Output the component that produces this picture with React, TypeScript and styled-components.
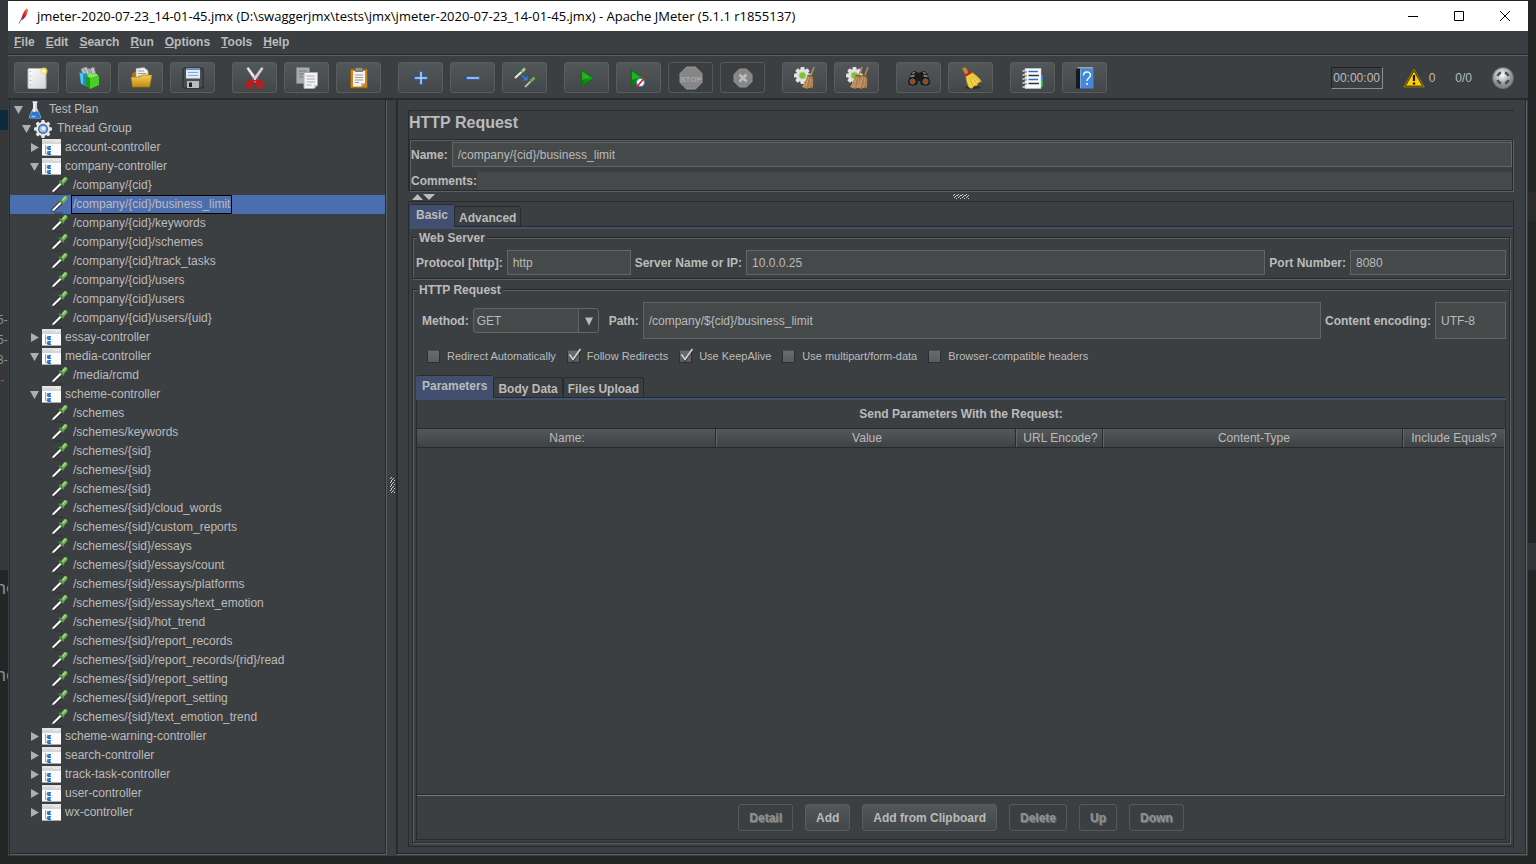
import React from 'react';
import styled, { createGlobalStyle, css } from 'styled-components';

const c = {
  panel: '#3c3f41',
  field: '#45494a',
  edge: '#646464',
  dark: '#282b2d',
  light: '#5d6061',
  text: '#bbbbbb',
  blue: '#424f6f',
  select: '#4b6eaf',
};

const Global = createGlobalStyle`
  *, *::before, *::after { box-sizing: border-box; }
  html, body { margin: 0; padding: 0; background: #242525; }
  body, button, input, select, table {
    font-family: "Liberation Sans", Arial, sans-serif;
    font-size: 12px;
    line-height: 16px;
    color: ${c.text};
  }
  button { margin: 0; padding: 0; border: 0; background: none; }
`;

/* ---------- desktop and window ---------- */

const Desktop = styled.div`
  display: grid;
  grid-template-columns: 8px minmax(0, 1fr) 8px;
  min-height: 100vh;
  background: #242525;
`;

const BehindLeft = styled.div`
  display: flex;
  flex-direction: column;
  overflow: hidden;
  background: linear-gradient(#35383a 110px, #0d293e 110px, #0d293e 130px, #353739 130px, #353739 570px, #242525 570px);
`;

const Scrap = styled.span<{ $gap: number; $big?: boolean; $red?: boolean }>`
  margin-top: ${p => p.$gap}px;
  margin-left: -3px;
  white-space: nowrap;
  line-height: 20px;
  color: ${p => (p.$red ? '#a8553a' : '#8b8f92')};
  ${p => p.$big && css`
    margin-left: -5px;
    font-family: "Noto Sans", sans-serif;
    font-size: 18px;
  `}
`;

const BehindRight = styled.div`
  background: linear-gradient(#242525 192px, #2b2b2b 192px, #2b2b2b 221px, #242525 221px, #242525 543px, #313435 543px, #313435 570px, #242525 570px);
`;

const Window = styled.div`
  display: flex;
  flex-direction: column;
  min-width: 0;
  margin: 1px 0 8px;
  background: ${c.panel};
`;

const TitleBar = styled.header`
  display: flex;
  align-items: center;
  height: 30px;
  padding-left: 8px;
  background: #fff;
  color: #000;
`;

const Title = styled.h1`
  flex: 1;
  margin: 0 0 0 5px;
  font: 400 13px/16px "Open Sans", "Noto Sans", sans-serif;
  white-space: nowrap;
`;

const WindowButton = styled.button`
  display: flex;
  align-items: center;
  justify-content: center;
  width: 46px;
  height: 30px;
`;

const MenuBar = styled.nav`
  display: flex;
  gap: 11px;
  height: 25px;
  padding: 3px 6px 0;
  border-bottom: 1px solid ${c.light};
  box-shadow: inset 0 -1px ${c.dark};
`;

const MenuButton = styled.button`
  height: 16px;
  font-weight: 700;
`;

/* ---------- toolbar ---------- */

const Toolbar = styled.div`
  display: flex;
  align-items: center;
  gap: 17px;
  height: 44px;
  padding: 1px 14px 0 6px;
  border-bottom: 2px solid ${c.dark};
`;

const ToolGroup = styled.div`
  display: flex;
  gap: 7px;
`;

const raised = css`
  border: 1px solid #5a5d5e;
  border-radius: 3px;
  background: linear-gradient(#525759, #434749);
  &:disabled { background: none; border-color: #57595a; }
`;

const ToolButton = styled.button`
  display: flex;
  align-items: center;
  justify-content: center;
  width: 45px;
  height: 31px;
  ${raised}
`;

const Status = styled.div`
  display: flex;
  align-items: center;
  margin-left: auto;
  gap: 20px;
`;

const Timer = styled.span`
  width: 52px;
  height: 22px;
  border: 1px solid;
  border-color: #222 #8b8d8e #8b8d8e #222;
  line-height: 20px;
  text-align: center;
`;

const Warnings = styled.span`
  display: flex;
  align-items: center;
  gap: 4px;
`;

/* ---------- split body ---------- */

const Body = styled.div`
  display: grid;
  grid-template-columns: 379px 8px minmax(0, 1fr);
  flex: 1;
  padding: 0 0 0 1px;
`;

const TreePane = styled.aside`
  border: solid ${c.dark};
  border-width: 0 1px 1px 1px;
  box-shadow: 1px 1px ${c.light};
  margin: 0 2px 2px 0;
`;

const Tree = styled.ul`
  margin: 0;
  padding: 0;
  list-style: none;
`;

const Node = styled.li<{ $depth: number; $selected?: boolean }>`
  display: flex;
  align-items: center;
  height: 19px;
  padding-left: ${p => 3 + p.$depth * 8}px;
  white-space: nowrap;
  background: ${p => (p.$selected ? c.select : 'transparent')};
`;

const Handle = styled.span`
  display: flex;
  width: 11px;
  margin-right: 1px;
`;

const NodeIcon = styled.span`
  display: flex;
  justify-content: center;
  width: 20px;
`;

const NodeText = styled.span<{ $selected?: boolean }>`
  height: 19px;
  margin-left: 2px;
  padding: 0 1px;
  line-height: 17px;
  border: 1px solid ${p => (p.$selected ? '#000' : 'transparent')};
`;

const Splitter = styled.div`
  display: flex;
  align-items: center;
  justify-content: center;
  padding-top: 14px;
`;

const Editor = styled.main`
  display: flex;
  flex-direction: column;
  min-width: 0;
  padding: 10px 11px 6px 10px;
  border: solid ${c.dark};
  border-width: 0 1px 1px 2px;
  box-shadow: 1px 1px ${c.light};
  margin: 0 2px 2px 0;
`;

/* ---------- editor form ---------- */

const HeadBox = styled.section`
  border: solid ${c.dark};
  border-width: 1px 0 0 1px;
`;

const Heading = styled.h2`
  height: 28px;
  margin: 0;
  font-size: 16px;
  line-height: 24px;
`;

const etched = css`
  border: 1px solid ${c.dark};
  box-shadow: inset 1px 1px ${c.light}, 1px 1px ${c.light};
`;

const NameBox = styled.div`
  ${etched}
  display: flex;
  flex-direction: column;
  gap: 5px;
  margin-right: 1px;
  padding: 2px 0 0 1px;
`;

const Line = styled.div<{ $gap?: number }>`
  display: flex;
  align-items: center;
  gap: ${p => p.$gap ?? 4}px;
`;

const Label = styled.label<{ $lead?: boolean }>`
  margin-left: ${p => (p.$lead ? 6 : 0)}px;
  font-weight: 700;
  white-space: nowrap;
`;

const Field = styled.input<{ $w?: number; $tall?: boolean; $bare?: boolean }>`
  ${p => (p.$w ? `flex: 0 0 ${p.$w}px; width: ${p.$w}px;` : 'flex: 1;')}
  min-width: 0;
  height: ${p => (p.$tall ? 37 : 25)}px;
  padding: 0 5px;
  border: 1px solid ${c.edge};
  border-radius: 0;
  background: ${c.field};
  outline: 0;
  ${p => p.$bare && 'height: 18px; border: 0;'}
`;

const Divider = styled.div`
  display: grid;
  grid-template-columns: 1fr auto 1fr;
  align-items: center;
  height: 10px;
  padding: 1px 4px 0;
`;

const Tabbed = styled.section`
  display: flex;
  flex-direction: column;
  flex: 1;
  border: 1px solid ${c.dark};
  padding: 2px 0 3px 1px;
`;

const TabList = styled.div`
  display: flex;
  align-items: flex-end;
  border-bottom: 2px solid ${c.blue};
  box-shadow: inset 0 -1px ${c.dark};
`;

const Tab = styled.button<{ $active?: boolean }>`
  height: 21px;
  padding: 1px 4px 0;
  border: 1px solid ${c.dark};
  border-bottom: 0;
  border-radius: 3px 3px 0 0;
  font-weight: 700;
  ${p => p.$active && css`
    height: 23px;
    padding: 0 5px 3px;
    background: ${c.blue};
    border-color: ${c.blue};
    border-top-color: ${c.dark};
  `}
`;

const GroupBox = styled.div<{ $grow?: boolean }>`
  ${etched}
  position: relative;
  display: flex;
  flex-direction: column;
  margin: ${p => (p.$grow ? '10px 3px 0 2px' : '8px 3px 0 2px')};
  padding: ${p => (p.$grow ? '12px 3px 2px' : '12px 3px 3px')};
  ${p => p.$grow && 'flex: 1;'}
`;

const Legend = styled.h3`
  position: absolute;
  top: -8px;
  left: 4px;
  margin: 0;
  padding: 0 2px;
  font-size: 12px;
  line-height: 16px;
  background: ${c.panel};
`;

const Combo = styled.div`
  display: flex;
  position: relative;
  flex: 0 0 126px;
`;

const Select = styled.select`
  width: 100%;
  height: 25px;
  padding: 0 3px;
  border: 1px solid ${c.edge};
  border-radius: 3px;
  appearance: none;
  background: linear-gradient(90deg, ${c.field} 104px, ${c.edge} 104px, ${c.edge} 105px, ${c.panel} 105px);
  outline: 0;
`;

const ComboArrow = styled.svg`
  position: absolute;
  right: 5px;
  top: 9px;
  pointer-events: none;
`;

const Checks = styled.div`
  display: flex;
  gap: 11px;
  height: 36px;
  padding: 9px 11px 0;
`;

const CheckLabel = styled.label`
  display: flex;
  align-items: center;
  gap: 7px;
  height: 16px;
  font-size: 11px;
  white-space: nowrap;
`;

const CheckBox = styled.input`
  appearance: none;
  width: 13px;
  height: 13px;
  margin: 0;
  border: 1px solid #2d2f30;
  border-top-color: #494c4d;
  background: linear-gradient(#6b6b6b, #5b5b5b);
`;

const CheckHolder = styled.span`
  position: relative;
  display: flex;
`;

const Tick = styled.svg`
  position: absolute;
  left: 0;
  top: -2px;
  pointer-events: none;
`;

const ParamPanel = styled.div`
  display: flex;
  flex-direction: column;
  flex: 1;
  border: solid ${c.dark};
  border-width: 0 1px 1px;
`;

const Caption = styled.h4`
  margin: 0;
  padding: 6px 0;
  font-size: 12px;
  line-height: 16px;
  text-align: center;
`;

const Scroll = styled.div`
  flex: 1;
  border-top: 1px solid ${c.dark};
  border-right: 1px solid ${c.light};
  border-bottom: 1px solid #77797a;
  box-shadow: inset 0 -1px ${c.dark};
`;

const Table = styled.table`
  width: 100%;
  table-layout: fixed;
  border-collapse: collapse;
`;

const Th = styled.th`
  height: 18px;
  padding: 0;
  border-bottom: 1px solid ${c.dark};
  font-weight: 400;
  line-height: 16px;
  background: linear-gradient(#54585a, #3f4244);
  box-shadow: inset -1px 0 ${c.edge}, inset -2px 0 ${c.dark};
  white-space: nowrap;
  &:last-child { box-shadow: none; }
`;

const Actions = styled.div`
  display: flex;
  justify-content: center;
  gap: 12px;
  padding: 8px 0;
`;

const Action = styled.button`
  height: 27px;
  padding: 0 10px;
  font-weight: 700;
  ${raised}
  &:disabled { color: #8f9192; text-shadow: 1px 1px #6f7274; }
`;

/* ---------- icons ---------- */

const Ico = ({ children, size = 24 }: { children: React.ReactNode; size?: number }) => (
  <svg width={size} height={size} viewBox="0 0 24 24" aria-hidden="true">{children}</svg>
);

const Hidden = styled.svg`
  position: absolute;
`;

const Defs = () => (
  <Hidden width="0" height="0" aria-hidden="true">
    <defs>
      <linearGradient id="paper" x2="1" y2="1"><stop stopColor="#fff" /><stop offset="1" stopColor="#d4d4d4" /></linearGradient>
      <linearGradient id="play"><stop stopColor="#067a06" /><stop offset="1" stopColor="#10b010" /></linearGradient>
      <linearGradient id="gold" x2="0" y2="1"><stop stopColor="#f3cf5c" /><stop offset="1" stopColor="#c48a0e" /></linearGradient>
      <linearGradient id="straw" x2="1"><stop stopColor="#c99b62" /><stop offset="1" stopColor="#8d6337" /></linearGradient>
      <radialGradient id="ball" cx=".45" cy=".35"><stop stopColor="#fff" /><stop offset="1" stopColor="#8a8a8a" /></radialGradient>
      <linearGradient id="feather" x1="0" y1="1" x2="1" y2="0"><stop stopColor="#6b2a7a" /><stop offset=".5" stopColor="#d0213c" /><stop offset="1" stopColor="#f6a11c" /></linearGradient>
    </defs>
  </Hidden>
);

const gearTeeth = (cx: number, cy: number, r: number, w: number) =>
  [0, 45, 90, 135].map(a => (
    <rect key={a} x={cx - w / 2} y={cy - r} width={w} height={r * 2} rx="1" transform={`rotate(${a} ${cx} ${cy})`} />
  ));

const Broom = ({ dx = 0 }: { dx?: number }) => (
  <g transform={`translate(${dx} 0)`}>
    <path d="M21 1 18 9" stroke="#b98a55" strokeWidth="1.600" />
    <path d="M15 8.500l4.500.5 1 4-.5 9.500-3.500-1-2 1.500-2.500-1-3-1c2-3 4-8 6-12.500z" fill="url(#straw)" />
    <path d="M16 11l-3.500 10M18 11l-1.500 11M19 13l0 8" stroke="#e0b985" strokeWidth=".6" />
    <path d="M14.500 9.500l5.500.5" stroke="#7d552d" />
  </g>
);

const CogBroom = ({ two }: { two?: boolean }) => (
  <Ico>
    <g fill="#e4e4e4">{gearTeeth(9.5, 9.5, 8.5, 4)}<circle cx="9.500" cy="9.500" r="6.500" /></g>
    <circle cx="9.500" cy="9.500" r="4" fill="#c9c9c9" />
    <circle cx="9.500" cy="9.500" r="3" fill="#7cc820" />
    {two && <Broom dx={-4} />}
    <Broom dx={two ? 2 : 0} />
  </Ico>
);

const Dropper = () => (
  <svg width="18" height="19" viewBox="0 0 18 19" aria-hidden="true">
    <path d="M4 18h9" stroke="#2b2d2f" opacity=".7" />
    <path d="M.5 17.500l1.500-4L9.500 6l3 3L5 16z" fill="#25282a" />
    <path d="M1 17l1.700-3.200L10 6.600l1.900 1.900-7.400 6.800z" fill="#8f9293" />
    <path d="M3 15.300L10.800 7.700" stroke="#fff" strokeWidth="1.700" />
    <path d="M9.200 4.800l4.600 4.400" stroke="#4a8a3c" strokeWidth="2.200" />
    <path d="M11 5.500l3-3.900c1.300-1.400 4.300.2 3.300 2.400L13.600 8z" fill="#6fb54e" />
    <path d="M12.500 5.300l3.200-3.500" stroke="#a9dc90" strokeWidth="1.400" />
  </svg>
);

const icons: Record<string, React.ReactNode> = {
  New: (
    <Ico>
      <rect x="3" y="2.500" width="18" height="20" rx="1" fill="url(#paper)" stroke="#b5b5b5" />
      <path d="M5.500 5v15" stroke="#999" strokeDasharray="1 3.500" />
      <circle cx="19" cy="5" r="3.500" fill="#f4e05c" opacity=".75" /><circle cx="19" cy="5" r="1.600" fill="#fffbd0" />
    </Ico>
  ),
  Templates: (
    <Ico>
      <path d="M4 3l5-2 3 2 5-2 2 8H6z" fill="#bfc5c8" stroke="#7c8488" strokeWidth=".7" />
      <path d="M7 3l3 6M13 2l2 6M10 2l4 7" stroke="#6f7679" strokeWidth=".8" />
      <path d="M2 6l8 2v13l-6-3z" fill="#1b8fd0" /><path d="M3 7l3 .8v10.500l-2-1z" fill="#5fc4ef" />
      <path d="M9 10l3-3 8 1 2 3v8l-9 4-4-3z" fill="#1e9c14" /><path d="M13 12l9-2v9l-9 4z" fill="#48cf28" />
      <path d="M12 7l8 1 1 2-8 2-3-2z" fill="#8be36c" />
    </Ico>
  ),
  Open: (
    <Ico>
      <path d="M3 20V8l2-2h15v4l1 10z" fill="#a87708" />
      <path d="M7 2.500l8-1 4 3v10H7z" fill="#f1f1f1" stroke="#999" strokeWidth=".6" />
      <path d="M9 5h6M9 7.500h8M9 10h8" stroke="#999" />
      <path d="M2 11h9l2-2h10l-2.500 12H3.500z" fill="url(#gold)" stroke="#a87708" strokeWidth=".7" />
    </Ico>
  ),
  Save: (
    <Ico>
      <path d="M3 2h18l1 1v19H3l-1-1V3z" fill="#4a4d52" stroke="#25272a" />
      <rect x="5" y="2.500" width="14" height="10" fill="#dce9f8" /><path d="M5 3.500h14" stroke="#5b8fd1" />
      <path d="M7 6.500h10M7 9.500h10" stroke="#8ca7c6" />
      <rect x="6" y="15" width="12" height="7" fill="#b9bcbe" /><rect x="8" y="16.500" width="3" height="4.500" fill="#222" />
    </Ico>
  ),
  Cut: (
    <Ico>
      <path d="M3.500 2.500l2-1.500L15 14l-2 2.500z" fill="#ececec" stroke="#888" strokeWidth=".5" />
      <path d="M20.500 2.500l-2-1.500L9 14l2 2.500z" fill="#d6d6d6" stroke="#888" strokeWidth=".5" />
      <g fill="none" stroke="#d21313" strokeWidth="2.600"><ellipse cx="7" cy="18.500" rx="2.500" ry="3" transform="rotate(35 7 18.500)" /><ellipse cx="17" cy="18.500" rx="2.500" ry="3" transform="rotate(-35 17 18.500)" /><path d="M8.500 16l3-2.500M15.500 16l-3-2.500" /></g>
      <circle cx="12" cy="13" r="1" fill="#eee" />
    </Ico>
  ),
  Copy: (
    <Ico>
      <path d="M1.500 1.500h13v16h-13z" fill="#a9abac" stroke="#7f8182" /><path d="M4 5h8M4 8h8M4 11h4" stroke="#777" />
      <path d="M9 6.500h13.500V19l-3.500 3.500H9z" fill="#f3f3f3" stroke="#aaa" /><path d="M11.500 10h8.500M11.500 13h8.500M11.500 16h8.500M11.500 19h5" stroke="#aaa" />
      <path d="M19 22.500V19h3.500z" fill="#c5c5c5" />
    </Ico>
  ),
  Paste: (
    <Ico>
      <rect x="3.500" y="3" width="17" height="19" rx="1" fill="#c9841c" stroke="#8a560a" />
      <path d="M6 5h12v12l-4 3.500H6z" fill="#f4f4f4" /><path d="M14 20.500V17h4z" fill="#bbb" />
      <rect x="8" y="1.500" width="8" height="4" rx="1" fill="#8d8f8c" stroke="#555" strokeWidth=".7" />
      <path d="M8 9h8M8 11.500h8M8 14h8M8 16.500h4" stroke="#999" />
    </Ico>
  ),
  Expand: <Ico><path d="M12 5v14M5 12h14" stroke="#2e68bd" strokeWidth="3.200" /><path d="M12 6v12M6 12h12" stroke="#b4d6f8" strokeWidth="1.500" /></Ico>,
  Collapse: <Ico><path d="M5 12h14" stroke="#2e68bd" strokeWidth="3.200" /><path d="M6 12h12" stroke="#b4d6f8" strokeWidth="1.500" /></Ico>,
  Toggle: (
    <Ico>
      <path d="M2 12L9 5.500" stroke="#e8e8e8" strokeWidth="2" /><path d="M7.500 4l3 3" stroke="#3d7a33" strokeWidth="1.400" /><path d="M9 5.500L12 2.500" stroke="#9bd680" strokeWidth="2.800" />
      <path d="M12 21L18 15" stroke="#b8b8b8" strokeWidth="1.800" /><path d="M16.500 13.500l3 3" stroke="#3d7a33" strokeWidth="1.400" /><path d="M18 15L21.500 11.500" stroke="#6db34f" strokeWidth="2.600" />
      <path d="M8.500 9l4 4" stroke="#2f7ff0" strokeWidth="1.500" /><path d="M14.500 10v4.500H10z" fill="#2f7ff0" />
    </Ico>
  ),
  Start: <Ico><path d="M6 3l12 9L6 21z" fill="url(#play)" stroke="#0b6d0b" strokeWidth=".6" /><path d="M7 5v9l8-2.500z" fill="#43d543" opacity=".5" /></Ico>,
  'Start no pauses': (
    <Ico><path d="M4 3l12 9L4 21z" fill="url(#play)" stroke="#0b6d0b" strokeWidth=".6" /><path d="M5 5v9l7-3z" fill="#43d543" opacity=".5" />
      <circle cx="13.500" cy="16.500" r="4" fill="#fff" stroke="#3c78c8" strokeWidth="1.200" /><path d="M9.500 21l8-9" stroke="#dd2222" strokeWidth="1.800" /></Ico>
  ),
  Stop: (
    <Ico><path d="M7.500 1h9L23 7.500v9L16.500 23h-9L1 16.500v-9z" fill="#868686" stroke="#979797" />
      <text x="12" y="15.500" textAnchor="middle" fontSize="8" fontWeight="700" fill="#a9a9a9">STOP</text></Ico>
  ),
  Shutdown: <Ico><path d="M8.500 3h7L21 8.500v7L15.500 21h-7L3 15.500v-7z" fill="#868686" stroke="#939393" /><path d="M8.500 8.500l7 7M15.500 8.500l-7 7" stroke="#bdbdbd" strokeWidth="2.800" /></Ico>,
  Clear: <CogBroom />,
  'Clear all': <CogBroom two />,
  Search: (
    <Ico>
      <path d="M4 7l3-2 3 1 2 1 2-1 3-1 3 2 3 9-1 3h-8l-1-4h-2l-1 4H2l-1-3z" fill="#1b1b1b" />
      <circle cx="5.500" cy="15.500" r="3.800" fill="#555" stroke="#111" /><circle cx="18.500" cy="15.500" r="3.800" fill="#555" stroke="#111" />
      <circle cx="5.500" cy="15.500" r="2.300" fill="#9c4a1c" /><circle cx="18.500" cy="15.500" r="2.300" fill="#9c4a1c" />
      <path d="M5 7.500l3-1M19 7.500l-3-1M3.500 10.500l4-1M20.500 10.500l-4-1" stroke="#999" strokeWidth="1.300" />
    </Ico>
  ),
  'Reset search': (
    <Ico>
      <ellipse cx="14" cy="21.500" rx="8" ry="1.500" fill="#2c2e2f" />
      <path d="M3 2.500l2-1.500 2.500 1 2.500 5.500-3.500 2z" fill="#c48a3e" stroke="#8a5514" strokeWidth=".7" />
      <path d="M7 10l6-3.500c4 2.500 7 5 9.500 9l-3 1-1.500 3-3 .5-2 2.500-3-1C8 18 7 14 7 10z" fill="#f0d348" stroke="#b5930f" strokeWidth=".6" />
      <path d="M10 11l4 9M12 10l6 8M13 9l8 6" stroke="#c9a51f" strokeWidth=".7" />
      <path d="M6.500 9.500l6-3.500" stroke="#d42020" strokeWidth="2.500" />
    </Ico>
  ),
  'Function helper': (
    <Ico>
      <path d="M18 9h4v6h-4z" fill="#2d7fe0" /><path d="M18 15h4v6h-4z" fill="#27b52a" />
      <path d="M4 2.500h16v20H4z" fill="#fcfcfc" stroke="#c8c8c8" strokeWidth=".6" />
      <path d="M7.500 5.500H17M7.500 13.500H17" stroke="#2d6bd0" strokeWidth="1.300" /><path d="M7.500 9.500H18M7.500 17.500H18" stroke="#333" strokeWidth="1.300" />
      <path d="M1.500 5h4M1.500 9h4M1.500 13h4M1.500 17h4M1.500 21h4" stroke="#ddd" strokeWidth="1.600" /><path d="M3 6h3M3 10h3M3 14h3M3 18h3" stroke="#444" strokeWidth=".8" />
    </Ico>
  ),
  Help: (
    <Ico>
      <path d="M3 2.500l2-1h15v1H7z" fill="#eee" /><path d="M3 2.500h4v20H3z" fill="#15181c" />
      <rect x="7" y="2.500" width="13.500" height="20" fill="#4687d6" /><path d="M7.500 3v19" stroke="#77abea" />
      <path d="M10.500 9.500c0-4.500 7-4.500 7-.5 0 3-3.500 3-3.500 6" fill="none" stroke="#f1f6fc" strokeWidth="1.500" /><circle cx="14" cy="18" r="1.100" fill="#f1f6fc" />
    </Ico>
  ),
};

const Triangle = ({ open }: { open: boolean }) => (
  <svg width="11" height="11" viewBox="0 0 11 11" aria-hidden="true">
    <path d={open ? 'M1 2h9L5.500 10z' : 'M2 1v9l8-4.500z'} fill="#adafb0" />
  </svg>
);

const Flask = () => (
  <svg width="18" height="18" viewBox="0 0 18 18" aria-hidden="true">
    <path d="M7 1h4v6l4 8.500c.5 1-.2 2-1.500 2h-9C3.200 17.500 2.500 16.500 3 15.500L7 7z" fill="#cfd6dc" />
    <path d="M6 10.500h6l3 5.500-1.500 1.500h-9L3 16z" fill="#2b78cf" /><path d="M8.200 2v9" stroke="#fff" strokeWidth="1.200" />
    <path d="M5.500 15.500h4" stroke="#9cc8f4" strokeWidth="1.500" /><path d="M6.500 1h5" stroke="#fff" strokeWidth="1.200" />
  </svg>
);

const Gear = () => (
  <svg width="18" height="18" viewBox="0 0 18 18" aria-hidden="true">
    <g fill="#e6e6e6">{gearTeeth(9, 9, 9, 3.5)}<circle cx="9" cy="9" r="7" /></g>
    <circle cx="9" cy="9" r="5" fill="#3c68a8" /><circle cx="9" cy="9" r="3.600" fill="#a3bfe2" /><circle cx="9.500" cy="8.500" r="2" fill="#e9f1fb" />
  </svg>
);

const ControllerIcon = () => (
  <svg width="19" height="17" viewBox="0 0 19 17" aria-hidden="true">
    <rect width="19" height="17" fill="#fbfbfb" /><path d="M0 0h19v5H0z" fill="#d6d6d6" /><path d="M0 1h19" stroke="#f2f2f2" />
    <path d="M12 2.500h5" stroke="#fff" strokeDasharray="1 1" />
    <path d="M3.500 6v9M3.500 9H6M3.500 14H6" stroke="#aaa" fill="none" />
    <path d="M5 7h4v1l-1 1 1 1v1H6l-1-1zM5 12h4v1l-1 1 1 1v1H6l-1-1z" fill="#2273cf" /><path d="M5 8h1.500M5 13h1.500" stroke="#8fbcf0" />
    <path d="M0 16.500h19" stroke="#aaa" />
  </svg>
);

const gripDots = [0, 1, 2, 3].flatMap(i => [[1, 0], [3, 1], [0, 1], [2, 2], [1, 3], [3, 4]].map(([a, b]) => [a + i * 4, b]));

const Grip = ({ vertical }: { vertical?: boolean }) => (
  <svg width={vertical ? 5 : 16} height={vertical ? 16 : 5} aria-hidden="true">
    {gripDots.map(([a, b]) => <rect key={`${a}-${b}`} x={vertical ? b : a} y={vertical ? a : b} width="1" height="1" fill="#c8cacb" />)}
  </svg>
);

/* ---------- data ---------- */

type Kind = 'plan' | 'threads' | 'controller' | 'sampler';
type Item = { text: string; kind: Kind; open?: boolean };

const ctl = (text: string, open = false): Item => ({ text, kind: 'controller', open });
const req = (text: string): Item => ({ text, kind: 'sampler' });

const tree: Item[] = [
  { text: 'Test Plan', kind: 'plan', open: true },
  { text: 'Thread Group', kind: 'threads', open: true },
  ctl('account-controller'),
  ctl('company-controller', true),
  ...['', '/business_limit', '/keywords', '/schemes', '/track_tasks', '/users', '/users', '/users/{uid}'].map(s => req('/company/{cid}' + s)),
  ctl('essay-controller'),
  ctl('media-controller', true),
  req('/media/rcmd'),
  ctl('scheme-controller', true),
  req('/schemes'),
  req('/schemes/keywords'),
  ...['', '', '', '/cloud_words', '/custom_reports', '/essays', '/essays/count', '/essays/platforms', '/essays/text_emotion',
    '/hot_trend', '/report_records', '/report_records/{rid}/read', '/report_setting', '/report_setting', '/text_emotion_trend',
  ].map(s => req('/schemes/{sid}' + s)),
  ctl('scheme-warning-controller'),
  ctl('search-controller'),
  ctl('track-task-controller'),
  ctl('user-controller'),
  ctl('wx-controller'),
];

const depth: Record<Kind, number> = { plan: 0, threads: 1, controller: 2, sampler: 3 };
const nodeIcon: Record<Kind, React.ReactNode> = { plan: <Flask />, threads: <Gear />, controller: <ControllerIcon />, sampler: <Dropper /> };

const tools = [
  ['New', 'Templates', 'Open', 'Save'],
  ['Cut', 'Copy', 'Paste'],
  ['Expand', 'Collapse', 'Toggle'],
  ['Start', 'Start no pauses', 'Stop', 'Shutdown'],
  ['Clear', 'Clear all'],
  ['Search', 'Reset search'],
  ['Function helper', 'Help'],
];

const columns: [string, string][] = [
  ['Name:', '27.6%'], ['Value', '27.6%'], ['URL Encode?', '8%'], ['Content-Type', '27.6%'], ['Include Equals?', '9.2%'],
];

const checks: [string, boolean][] = [
  ['Redirect Automatically', false], ['Follow Redirects', true], ['Use KeepAlive', true],
  ['Use multipart/form-data', false], ['Browser-compatible headers', false],
];

const actions: [string, boolean][] = [
  ['Detail', false], ['Add', true], ['Add from Clipboard', true], ['Delete', false], ['Up', false], ['Down', false],
];

/* ---------- app ---------- */

export default function App() {
  return (
    <>
      <Global />
      <Defs />
      <Desktop>
        <BehindLeft aria-hidden="true">
          <Scrap $gap={310}>5-</Scrap>
          <Scrap $gap={0}>5-</Scrap>
          <Scrap $gap={0}>3-</Scrap>
          <Scrap $gap={0} $red>&nbsp;-</Scrap>
          <Scrap $gap={187} $big>no</Scrap>
          <Scrap $gap={67} $big>ne</Scrap>
        </BehindLeft>
        <Window>
          <TitleBar>
            <svg width="16" height="16" viewBox="0 0 16 16" aria-hidden="true">
              <path d="M5 12C6 8 7.500 3 10.500.5c1.500 0 1.800 1.500 1 4C10.500 7.500 8.500 11 6 12z" fill="url(#feather)" />
              <path d="M3 15.500L5.500 11" stroke="#7a3a62" strokeWidth=".8" />
            </svg>
            <Title>jmeter-2020-07-23_14-01-45.jmx (D:\swaggerjmx\tests\jmx\jmeter-2020-07-23_14-01-45.jmx) - Apache JMeter (5.1.1 r1855137)</Title>
            <WindowButton aria-label="Minimize"><svg width="10" height="10"><path d="M0 5.500h10" stroke="#000" /></svg></WindowButton>
            <WindowButton aria-label="Maximize"><svg width="10" height="10"><path d="M.5.5h9v9h-9z" stroke="#000" fill="none" /></svg></WindowButton>
            <WindowButton aria-label="Close"><svg width="10" height="10"><path d="M0 0l10 10M10 0L0 10" stroke="#000" /></svg></WindowButton>
          </TitleBar>
          <MenuBar>
            {['File', 'Edit', 'Search', 'Run', 'Options', 'Tools', 'Help'].map(m => <MenuButton key={m}><u>{m[0]}</u>{m.slice(1)}</MenuButton>)}
          </MenuBar>
          <Toolbar>
            {tools.map(group => (
              <ToolGroup key={group[0]}>
                {group.map(t => <ToolButton key={t} aria-label={t} disabled={t === 'Stop' || t === 'Shutdown'}>{icons[t]}</ToolButton>)}
              </ToolGroup>
            ))}
            <Status>
              <Timer>00:00:00</Timer>
              <Warnings>
                <svg width="22" height="20" viewBox="0 0 22 20" aria-hidden="true">
                  <path d="M11 1L21.300 19H.7z" fill="#8a7008" stroke="#8a7008" strokeLinejoin="round" />
                  <path d="M11 3L19.500 18h-17z" fill="#f9cc0a" stroke="#3a3205" strokeWidth=".8" />
                  <path d="M11 7v6" stroke="#1c1a05" strokeWidth="2.200" /><circle cx="11" cy="15.500" r="1.200" fill="#1c1a05" />
                </svg>
                0
              </Warnings>
              <span>0/0</span>
              <svg width="22" height="22" viewBox="0 0 22 22" aria-hidden="true">
                <circle cx="11" cy="11" r="10.500" fill="url(#ball)" stroke="#6f6f6f" />
                <g fill="none" stroke="#4a4d4f" strokeWidth="2.500"><path d="M9 5.500A6 6 0 0 0 5.500 9M13 5.500A6 6 0 0 1 16.500 9M9 16.500A6 6 0 0 1 5.500 13M13 16.500A6 6 0 0 0 16.500 13" /></g>
              </svg>
            </Status>
          </Toolbar>
          <Body>
            <TreePane>
              <Tree role="tree">
                {tree.map((n, i) => {
                  const selected = i === 5;
                  return (
                    <Node key={i} role="treeitem" aria-selected={selected} $depth={depth[n.kind]} $selected={selected}>
                      <Handle>{n.kind !== 'sampler' && <Triangle open={!!n.open} />}</Handle>
                      <NodeIcon>{nodeIcon[n.kind]}</NodeIcon>
                      <NodeText $selected={selected}>{n.text}</NodeText>
                    </Node>
                  );
                })}
              </Tree>
            </TreePane>
            <Splitter><Grip vertical /></Splitter>
            <Editor>
              <HeadBox>
                <Heading>HTTP Request</Heading>
                <NameBox>
                  <Line><Label htmlFor="name">Name:</Label><Field id="name" defaultValue="/company/{cid}/business_limit" /></Line>
                  <Line $gap={0}><Label htmlFor="comments">Comments:</Label><Field id="comments" $bare /></Line>
                </NameBox>
              </HeadBox>
              <Divider>
                <svg width="23" height="6" viewBox="0 0 23 6" aria-hidden="true"><path d="M0 6L5.500 0 11 6zM11 0h12l-6 6z" fill="#bbb" /></svg>
                <Grip />
              </Divider>
              <Tabbed>
                <TabList role="tablist">
                  <Tab role="tab" $active>Basic</Tab>
                  <Tab role="tab">Advanced</Tab>
                </TabList>
                <GroupBox>
                  <Legend>Web Server</Legend>
                  <Line>
                    <Label htmlFor="protocol">Protocol [http]:</Label><Field id="protocol" $w={124} defaultValue="http" />
                    <Label htmlFor="server">Server Name or IP:</Label><Field id="server" defaultValue="10.0.0.25" />
                    <Label htmlFor="port">Port Number:</Label><Field id="port" $w={156} defaultValue="8080" />
                  </Line>
                </GroupBox>
                <GroupBox $grow>
                  <Legend>HTTP Request</Legend>
                  <Line>
                    <Label htmlFor="method" $lead>Method:</Label>
                    <Combo>
                      <Select id="method"><option>GET</option></Select>
                      <ComboArrow width="10" height="9" viewBox="0 0 10 9"><path d="M1 .5h8L5 8.500z" fill="#bbb" /></ComboArrow>
                    </Combo>
                    <Label htmlFor="path" $lead>Path:</Label><Field id="path" $tall defaultValue="/company/${cid}/business_limit" />
                    <Label htmlFor="encoding">Content encoding:</Label><Field id="encoding" $w={71} $tall defaultValue="UTF-8" />
                  </Line>
                  <Checks>
                    {checks.map(([text, on]) => (
                      <CheckLabel key={text}>
                        <CheckHolder>
                          <CheckBox type="checkbox" defaultChecked={on} />
                          {on && <Tick width="15" height="14" viewBox="0 0 15 14"><path d="M3 7.500l3 5L13.500 2" stroke="#222" strokeWidth="2" fill="none" /><path d="M2.500 6.500l3.500 5L13.500 1" stroke="#d0d0d0" strokeWidth="1.800" fill="none" /></Tick>}
                        </CheckHolder>
                        {text}
                      </CheckLabel>
                    ))}
                  </Checks>
                  <TabList role="tablist">
                    <Tab role="tab" $active>Parameters</Tab>
                    <Tab role="tab">Body Data</Tab>
                    <Tab role="tab">Files Upload</Tab>
                  </TabList>
                  <ParamPanel>
                    <Caption>Send Parameters With the Request:</Caption>
                    <Scroll>
                      <Table>
                        <thead><tr>{columns.map(([name, w]) => <Th key={name} scope="col" width={w}>{name}</Th>)}</tr></thead>
                      </Table>
                    </Scroll>
                    <Actions>
                      {actions.map(([text, on]) => <Action key={text} disabled={!on}>{text}</Action>)}
                    </Actions>
                  </ParamPanel>
                </GroupBox>
              </Tabbed>
            </Editor>
          </Body>
        </Window>
        <BehindRight />
      </Desktop>
    </>
  );
}
